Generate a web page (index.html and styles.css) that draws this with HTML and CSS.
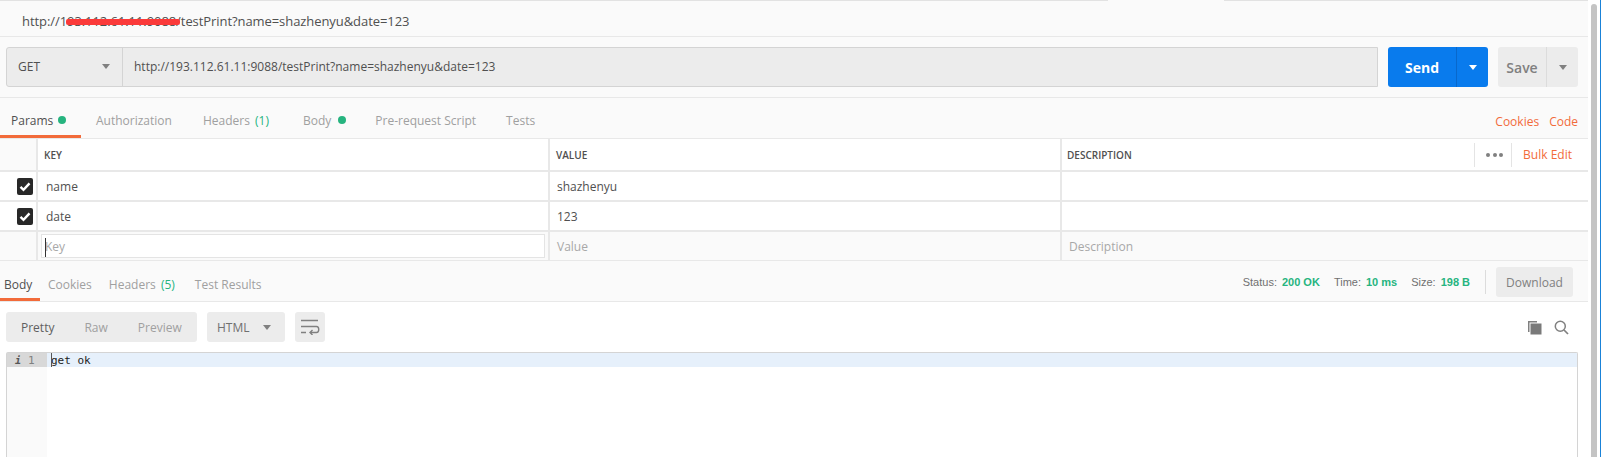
FILE: index.html
```html
<!DOCTYPE html>
<html lang="en">
<head>
<meta charset="utf-8">
<title>Request</title>
<link rel="stylesheet" href="styles.css">
</head>
<body>
<div class="window">
  <main class="app">
    <div class="topline"><span class="seg seg-a"></span><span class="seg-gap"></span><span class="seg seg-b"></span></div>
    <header class="title"><span class="title-text">http://193.112.61.11:9088/testPrint?name=shazhenyu&amp;date=123<i class="redact"></i></span></header>
    <section class="urlrow">
      <div class="urlbox">
        <div class="method"><span>GET</span><i class="caret"></i></div>
        <div class="urlinput">http://193.112.61.11:9088/testPrint?name=shazhenyu&amp;date=123</div>
      </div>
      <div class="send"><span class="send-label">Send</span><span class="send-drop"><i class="caret caret-white"></i></span></div>
      <div class="save"><span class="save-label">Save</span><span class="save-drop"><i class="caret"></i></span></div>
    </section>
    <nav class="reqtabs">
      <a class="tab tab-params active">Params<i class="dot"></i></a>
      <a class="tab tab-auth">Authorization</a>
      <a class="tab tab-headers">Headers <em>(1)</em></a>
      <a class="tab tab-body">Body<i class="dot dot-body"></i></a>
      <a class="tab tab-pre">Pre-request Script</a>
      <a class="tab tab-tests">Tests</a>
      <span class="reqlinks"><a>Cookies</a><a>Code</a></span>
    </nav>
    <section class="params">
      <div class="cell chk head"></div>
      <div class="cell th">KEY</div>
      <div class="cell th th-v">VALUE</div>
      <div class="cell th th-d"><span>DESCRIPTION</span><span class="th-tools"><span class="dots"><b></b><b></b><b></b></span><a>Bulk Edit</a></span></div>

      <div class="cell chk"><svg class="check" width="16" height="17" viewBox="0 0 16 17"><rect width="16" height="17" rx="2" fill="#282828"/><path d="M3.5 8.8 6.5 11.8 12.5 5.4" fill="none" stroke="#fff" stroke-width="2.4"/></svg></div>
      <div class="cell td">name</div>
      <div class="cell td td-v">shazhenyu</div>
      <div class="cell td"></div>

      <div class="cell chk"><svg class="check" width="16" height="17" viewBox="0 0 16 17"><rect width="16" height="17" rx="2" fill="#282828"/><path d="M3.5 8.8 6.5 11.8 12.5 5.4" fill="none" stroke="#fff" stroke-width="2.4"/></svg></div>
      <div class="cell td">date</div>
      <div class="cell td td-v">123</div>
      <div class="cell td"></div>

      <div class="cell chk newrow"></div>
      <div class="cell newrow keycell"><div class="keyinput"><i class="cursor"></i>Key</div></div>
      <div class="cell newrow ph">Value</div>
      <div class="cell newrow ph">Description</div>
    </section>
    <nav class="restabs">
      <a class="tab rtab-body active">Body</a>
      <a class="tab rtab-cookies">Cookies</a>
      <a class="tab rtab-headers">Headers <em>(5)</em></a>
      <a class="tab rtab-tests">Test Results</a>
      <div class="stats">
        <span class="lab">Status:</span><span class="val v1">200 OK</span>
        <span class="lab">Time:</span><span class="val v2">10 ms</span>
        <span class="lab">Size:</span><span class="val v3">198 B</span>
        <i class="statdiv"></i>
        <span class="download">Download</span>
      </div>
    </nav>
    <section class="response">
      <div class="toolbar">
        <div class="seggroup"><span class="on">Pretty</span><span>Raw</span><span>Preview</span></div>
        <div class="format"><span>HTML</span><i class="caret"></i></div>
        <div class="wrap">
          <svg width="20" height="16" viewBox="0 0 20 16"><path d="M1 1.5H18M1 7.5H16.5C19.5 7.5 19.5 13.5 16.5 13.5H10M12.5 11 10 13.5 12.5 16M1 13.5H6" fill="none" stroke="#808080" stroke-width="1.4"/></svg>
        </div>
        <div class="tools">
          <svg width="15" height="15" viewBox="0 0 15 15"><path d="M1 1H10V2.5H2.5V12H1Z" fill="#808080"/><rect x="3.5" y="3.5" width="11" height="11" fill="#7a7a7a"/></svg>
          <svg width="15" height="15" viewBox="0 0 15 15"><circle cx="6.3" cy="6.3" r="5" fill="none" stroke="#808080" stroke-width="1.5"/><path d="M10 10 14 14" stroke="#808080" stroke-width="1.7"/></svg>
        </div>
      </div>
      <div class="code">
        <div class="gutter"><div class="gutter-line"><i>i</i><span>1</span></div></div>
        <div class="lines"><div class="line"><i class="caretline"></i>get ok</div></div>
      </div>
    </section>
  </main>
  <aside class="scroll"><div class="thumb"></div><div class="bluebar"></div></aside>
</div>
</body>
</html>
```
FILE: styles.css
```css
* { box-sizing: border-box; }
html, body { margin: 0; padding: 0; height: 457px; overflow: hidden; background: #fff; }
body { font-family: "Open Sans", "Liberation Sans", sans-serif; font-size: 12px; color: #505050; }
a { cursor: default; }
i, em { font-style: normal; }

.window { display: flex; width: 1607px; height: 457px; overflow: hidden; }
.app { width: 1588px; flex: none; background: #fafafa; display: flex; flex-direction: column; }

.topline { display: flex; height: 1px; flex: none; }
.seg { background: #e2e2e2; }
.seg-a { width: 1108px; }
.seg-gap { width: 116px; }
.seg-b { flex: 1; }

.title { height: 36px; flex: none; border-bottom: 1px solid #e8e8e8; padding: 5px 0 0 22px; display: flex; align-items: center; font-size: 13px; letter-spacing: -0.07px; color: #505050; }
.title-text { position: relative; }
.redact { position: absolute; left: 44px; top: 7px; width: 114px; height: 6px; background: #fb3a3a; border-radius: 2px; }

.urlrow { height: 61px; flex: none; border-bottom: 1px solid #e8e8e8; padding: 10px 0 10px 6px; display: flex; }
.urlbox { width: 1372px; height: 40px; display: flex; background: #ececec; border: 1px solid #d4d4d4; border-radius: 3px 0 0 3px; }
.method { width: 116px; flex: none; border-right: 1px solid #d4d4d4; display: flex; align-items: center; justify-content: space-between; padding: 0 12px 2px 11px; font-size: 12px; color: #505050; font-weight: 500; }
.urlinput { flex: 1; padding: 0 0 2px 11px; display: flex; align-items: center; font-size: 12px; color: #505050; }
.caret { width: 0; height: 0; border-left: 4.5px solid transparent; border-right: 4.5px solid transparent; border-top: 5px solid #808080; display: block; }
.caret-white { border-top-color: #fff; }

.send { margin-left: 10px; width: 100px; height: 40px; background: #097bed; border-radius: 3px; display: flex; color: #fff; font-weight: 700; font-size: 14px; }
.send-label { width: 69px; display: flex; align-items: center; justify-content: center; border-right: 1px solid #0868cc; }
.send-drop { flex: 1; display: flex; align-items: center; justify-content: center; }
.save { margin-left: 10px; width: 80px; height: 40px; background: #ececec; border-radius: 3px; display: flex; color: #808080; font-weight: 600; font-size: 14px; }
.save-label { width: 49px; display: flex; align-items: center; justify-content: center; border-right: 1px solid #dcdcdc; }
.save-drop { flex: 1; display: flex; align-items: center; justify-content: center; }

.reqtabs { height: 41px; flex: none; display: flex; align-items: stretch; border-bottom: 1px solid #e8e8e8; }
.tab { display: flex; align-items: center; color: #a0a0a0; font-size: 12px; border-bottom: 3px solid transparent; height: 100%; white-space: pre; }
.reqtabs .tab { padding-top: 7px; }
.restabs .tab { padding-top: 9px; }
.tab.active { color: #505050; border-bottom-color: #f26b3a; }
.tab em { color: #26b47f; margin-left: 2px; }
.dot { width: 8px; height: 8px; border-radius: 50%; background: #26b47f; margin-left: 5px; }
.dot-body { margin-left: 7px; }
.tab-params { padding: 0 11px; width: 81px; }
.tab-auth { margin-left: 15px; }
.tab-headers { margin-left: 31px; }
.tab-body { margin-left: 34px; }
.tab-pre { margin-left: 29px; }
.tab-tests { margin-left: 30px; }
.reqlinks { margin-left: auto; padding: 7px 10px 0 0; display: flex; align-items: center; gap: 10px; color: #f26b3a; }

.params { height: 122px; flex: none; display: grid; grid-template-columns: 36px 510px 510px 1fr; grid-template-rows: 31px 28px 28px 28px; gap: 2px; background: #e8e8e8; padding: 0 0 1px 0; column-gap: 2px; }
.cell { background: #fff; display: flex; align-items: center; min-width: 0; }
.chk { background: #fafafa; justify-content: flex-end; padding-right: 3px; }
.chk:not(.head):not(.newrow) { background: #fff; }
.th { font-size: 10px; font-weight: 600; color: #505050; padding-left: 6px; }
.th-v { padding-left: 6px; }
.th-d { padding-left: 5px; justify-content: space-between; padding-right: 16px; }
.th-tools { display: flex; align-items: center; height: 24px; }
.th-tools a { color: #f26b3a; font-size: 12px; font-weight: 400; border-left: 1px solid #e4e4e4; height: 100%; display: flex; align-items: center; padding-left: 11px; }
.dots { display: flex; gap: 2.5px; width: 37px; height: 100%; align-items: center; padding-left: 11px; border-left: 1px solid #e4e4e4; }
.dots b { width: 4px; height: 4px; border-radius: 50%; background: #808080; }
.td { padding-left: 8px; color: #505050; }
.td-v { padding-left: 7px; }
.newrow { background: #fafafa; }
.ph { color: #a8a8a8; padding-left: 7px; }
.keycell { padding: 2px 3px; }
.keyinput { position: relative; width: 100%; height: 100%; background: #fff; border: 1px solid #e4e4e4; padding-left: 3px; display: flex; align-items: center; color: #a8a8a8; }
.cursor { position: absolute; left: 3px; top: 3px; width: 1px; height: 19px; background: #333; }

.restabs { height: 41px; flex: none; display: flex; align-items: stretch; border-bottom: 1px solid #e8e8e8; }
.rtab-body { width: 40px; padding-left: 4px; }
.rtab-cookies { margin-left: 8px; }
.rtab-headers { margin-left: 17px; }
.rtab-tests { margin-left: 20px; }
.stats { margin-left: auto; padding: 2px 15px 0 0; display: flex; align-items: center; font-family: "Liberation Sans", Arial, sans-serif; font-size: 11px; height: 40px; }
.lab { color: #707070; }
.val { color: #26b47f; font-weight: 700; margin-left: 5px; }
.v1 { margin-right: 14px; }
.v2 { margin-right: 14px; }
.statdiv { width: 1px; height: 24px; background: #dcdcdc; margin: 0 10px 0 15px; }
.download { width: 77px; height: 30px; border-radius: 3px; background: #ececec; color: #808080; display: flex; align-items: center; justify-content: center; font-family: "Open Sans", sans-serif; font-size: 12px; }

.response { flex: 1; background: #fff; display: flex; flex-direction: column; min-height: 0; }
.toolbar { flex: none; height: 50px; padding: 10px 19px 10px 6px; display: flex; align-items: flex-start; }
.seggroup { width: 191px; height: 30px; background: #ececec; border-radius: 3px; display: flex; align-items: center; color: #a0a0a0; padding-left: 15px; gap: 30px; }
.seggroup .on { color: #606060; }
.format { margin-left: 10px; width: 78px; height: 30px; background: #ececec; border-radius: 3px; display: flex; align-items: center; justify-content: space-between; padding: 0 14px 0 10px; color: #707070; }
.wrap { margin-left: 10px; width: 30px; height: 30px; background: #ececec; border-radius: 3px; display: flex; align-items: center; justify-content: center; }
.tools { margin-left: auto; display: flex; gap: 12px; align-items: center; height: 30px; }

.code { flex: 1; margin-left: 6px; margin-right: 10px; border: 1px solid #d4d4d4; border-bottom: 0; border-radius: 2px 2px 0 0; display: flex; min-height: 0; }
.gutter { width: 40px; flex: none; background: #fafafa; }
.gutter-line { height: 14px; background: #d8d8d8; font-family: "DejaVu Sans Mono", monospace; font-size: 11px; color: #808080; display: flex; align-items: center; padding-left: 8px; gap: 7px; }
.gutter-line i { color: #555; font-style: italic; font-weight: 700; font-size: 10px; }
.lines { flex: 1; }
.line { position: relative; height: 14px; background: #e6f0fb; font-family: "DejaVu Sans Mono", monospace; font-size: 11px; line-height: 15px; color: #222; padding-left: 4px; }
.caretline { position: absolute; left: 4px; top: 0; width: 1px; height: 14px; background: #555; }

.scroll { flex: 1; display: flex; padding: 4px 0 0 3px; gap: 3px; }
.thumb { width: 6px; height: 453px; background: #c4c4c4; border-radius: 3px 3px 0 0; }
.bluebar { width: 1px; height: 457px; margin-top: -4px; background: #1a82d8; }
```
